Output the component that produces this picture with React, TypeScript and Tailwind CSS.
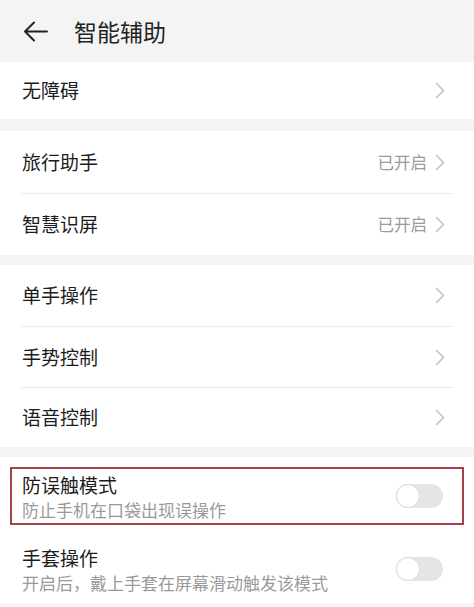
import { ReactNode } from 'react';

function Chevron() {
  return (
    <svg width="10" height="17" viewBox="0 0 10 17" fill="none" className="shrink-0">
      <path d="M1.5 1.5 L8.5 8.5 L1.5 15.5" stroke="#c2c2c2" strokeWidth="1.6" strokeLinecap="round" strokeLinejoin="round" />
    </svg>
  );
}

function Toggle() {
  return (
    <div className="w-[47px] h-[24px] rounded-full bg-[#e5e5e5] flex items-center shrink-0">
      <div className="w-[24px] h-[24px] rounded-full bg-white border border-[#d9d9d9]" />
    </div>
  );
}

function NavRow({ label, value, height }: { label: string; value?: string; height: string }) {
  return (
    <div className={`flex items-center justify-between pl-[22px] pr-[29px] ${height}`}>
      <span className="text-[19px] text-[#1c1c1c]">{label}</span>
      <div className="flex items-center gap-[8px]">
        {value && <span className="text-[16.5px] text-[#9a9a9a]">{value}</span>}
        <Chevron />
      </div>
    </div>
  );
}

function Divider() {
  return <div className="mx-[20px] h-px bg-[#ececec]" />;
}

function Section({ children }: { children: ReactNode }) {
  return <div className="bg-white">{children}</div>;
}

export default function App() {
  return (
    <div className="w-[474px] h-[607px] bg-[#f4f4f4] overflow-hidden font-['Noto_Sans_CJK_SC','Noto_Sans',sans-serif]">
      {/* 顶栏 */}
      <div className="h-[62px] flex items-center pl-[23px]">
        <svg width="25" height="21" viewBox="0 0 25 21" fill="none">
          <path d="M24 10.5 H2 M11 1.5 L2 10.5 L11 19.5" stroke="#222" strokeWidth="2" strokeLinecap="round" strokeLinejoin="round" />
        </svg>
        <span className="ml-[26px] text-[23px] text-[#222]">智能辅助</span>
      </div>

      <Section>
        <NavRow label="无障碍" height="h-[57px]" />
      </Section>

      <div className="h-[12px]" />

      <Section>
        <NavRow label="旅行助手" value="已开启" height="h-[62px]" />
        <Divider />
        <NavRow label="智慧识屏" value="已开启" height="h-[61px]" />
      </Section>

      <div className="h-[10px]" />

      <Section>
        <NavRow label="单手操作" height="h-[61px]" />
        <Divider />
        <NavRow label="手势控制" height="h-[60px]" />
        <Divider />
        <NavRow label="语音控制" height="h-[59px]" />
      </Section>

      <div className="h-[10px]" />

      <Section>
        <div className="pt-[10px]">
          <div className="mx-[10px] h-[58px] border-2 border-[#a8404a] flex items-center justify-between pl-[10px] pr-[19px]">
            <div className="flex flex-col">
              <span className="text-[19px] leading-[27px] text-[#1c1c1c]">防误触模式</span>
              <span className="text-[17px] leading-[24px] text-[#9a9a9a]">防止手机在口袋出现误操作</span>
            </div>
            <Toggle />
          </div>
        </div>
        <div className="h-[78px] pt-[10px] flex items-center justify-between pl-[22px] pr-[31px]">
          <div className="flex flex-col">
            <span className="text-[19px] leading-[27px] text-[#1c1c1c]">手套操作</span>
            <span className="text-[17px] leading-[24px] text-[#9a9a9a]">开启后，戴上手套在屏幕滑动触发该模式</span>
          </div>
          <Toggle />
        </div>
      </Section>
    </div>
  );
}
